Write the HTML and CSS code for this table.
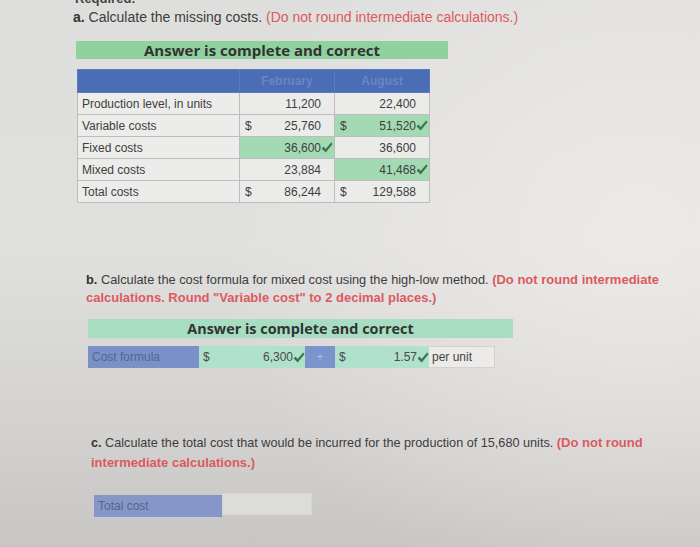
FILE: index.html
```html
<!DOCTYPE html>
<html>
<head>
<meta charset="utf-8">
<link rel="stylesheet" href="styles.css">
</head>
<body>
<div class="page">
  <p class="req">Required:</p>
  <p class="q qa"><b>a.</b> Calculate the missing costs. <span class="red">(Do not round intermediate calculations.)</span></p>
  <div class="banner banner-a">Answer is complete and correct</div>
  <table class="costs">
    <thead>
      <tr><th class="lbl"></th><th>February</th><th>August</th></tr>
    </thead>
    <tbody>
      <tr><td class="lbl">Production level, in units</td>
        <td><div class="cell"><span class="cur"></span><span class="val">11,200</span><span class="ck"></span></div></td>
        <td><div class="cell"><span class="cur"></span><span class="val">22,400</span><span class="ck"></span></div></td></tr>
      <tr><td class="lbl">Variable costs</td>
        <td><div class="cell"><span class="cur">$</span><span class="val">25,760</span><span class="ck"></span></div></td>
        <td class="ok"><div class="cell"><span class="cur">$</span><span class="val">51,520</span><span class="ck"><svg viewBox="0 0 12 11" class="tick"><path d="M0.6 6.4 L2.6 4.6 L4.6 6.9 L10.2 0.6 L11.6 2 L4.7 10.4 Z"/></svg></span></div></td></tr>
      <tr><td class="lbl">Fixed costs</td>
        <td class="ok"><div class="cell"><span class="cur"></span><span class="val">36,600</span><span class="ck"><svg viewBox="0 0 12 11" class="tick"><path d="M0.6 6.4 L2.6 4.6 L4.6 6.9 L10.2 0.6 L11.6 2 L4.7 10.4 Z"/></svg></span></div></td>
        <td><div class="cell"><span class="cur"></span><span class="val">36,600</span><span class="ck"></span></div></td></tr>
      <tr><td class="lbl">Mixed costs</td>
        <td><div class="cell"><span class="cur"></span><span class="val">23,884</span><span class="ck"></span></div></td>
        <td class="ok"><div class="cell"><span class="cur"></span><span class="val">41,468</span><span class="ck"><svg viewBox="0 0 12 11" class="tick"><path d="M0.6 6.4 L2.6 4.6 L4.6 6.9 L10.2 0.6 L11.6 2 L4.7 10.4 Z"/></svg></span></div></td></tr>
      <tr><td class="lbl">Total costs</td>
        <td><div class="cell"><span class="cur">$</span><span class="val">86,244</span><span class="ck"></span></div></td>
        <td><div class="cell"><span class="cur">$</span><span class="val">129,588</span><span class="ck"></span></div></td></tr>
    </tbody>
  </table>

  <p class="q qb"><span class="reg"><b>b.</b> Calculate the cost formula for mixed cost using the high-low method. </span><span class="red strong">(Do not round intermediate</span><br><span class="red strong">calculations. Round "Variable cost" to 2 decimal places.)</span></p>
  <div class="banner banner-b">Answer is complete and correct</div>
  <div class="formula">
    <div class="f-lbl">Cost formula</div>
    <div class="f-val f-fixed"><span class="cur">$</span><span class="val">6,300</span><svg viewBox="0 0 12 11" class="tick"><path d="M0.6 6.4 L2.6 4.6 L4.6 6.9 L10.2 0.6 L11.6 2 L4.7 10.4 Z"/></svg></div>
    <div class="f-plus">+</div>
    <div class="f-val f-var"><span class="cur">$</span><span class="val">1.57</span><svg viewBox="0 0 12 11" class="tick"><path d="M0.6 6.4 L2.6 4.6 L4.6 6.9 L10.2 0.6 L11.6 2 L4.7 10.4 Z"/></svg></div>
    <div class="f-unit">per unit</div>
  </div>

  <p class="q qc"><span class="reg"><b>c.</b> Calculate the total cost that would be incurred for the production of 15,680 units. </span><span class="red strong">(Do not round</span><br><span class="red strong">intermediate calculations.)</span></p>
  <div class="total">
    <div class="t-lbl">Total cost</div>
    <div class="t-input"></div>
  </div>
</div>
</body>
</html>
```

FILE: styles.css
```css
html, body {
  margin: 0;
  padding: 0;
}
body {
  width: 700px;
  height: 547px;
  overflow: hidden;
  font-family: "Liberation Sans", Arial, sans-serif;
  color: #3c3c3c;
  background:
    radial-gradient(ellipse 420px 380px at 640px 230px, rgba(238,236,234,0.85), rgba(238,236,234,0) 100%),
    linear-gradient(180deg, #dededc 0%, #e0e0de 45%, #d2d1cf 80%, #c7c6c4 100%);
}
.page {
  display: flow-root;
}
p { margin: 0; }

.req {
  margin: -8px 0 0 75px;
  font-size: 13px;
  font-weight: bold;
  line-height: 14px;
  color: #444;
}
.q {
  font-size: 13px;
  white-space: nowrap;
}
.q b { font-weight: bold; color: #333; }
.red { color: #dc5a5e; }
.strong { font-weight: bold; }

.qa {
  margin: 3px 0 0 73px;
  line-height: 16px;
  font-size: 14px;
}

.banner {
  font-family: "Open Sans", "DejaVu Sans", sans-serif;
  font-weight: bold;
  color: #333;
  text-align: center;
}
.banner-a {
  margin: 16px 0 0 76px;
  width: 372px;
  height: 18px;
  line-height: 18px;
  font-size: 15px;
  background: #8fd29f;
}

.costs {
  margin: 10px 0 0 77px;
  border-collapse: collapse;
  font-size: 12px;
  color: #3e3e3e;
  border: 1px solid #a9a9a9;
}
.costs th {
  background: #4b6db5;
  color: #6885c4;
  height: 22px;
  padding: 0;
  font-weight: bold;
  font-size: 12px;
  border: 1px solid #5a7abd;
  width: 94px;
}
.costs th.lbl { width: 161px; }
.costs td {
  height: 21px;
  padding: 0;
  border: 1px solid #bdbdbd;
  background: #ebebea;
}
.costs td.lbl {
  padding-left: 4px;
  background: #ececeb;
}
.costs td.ok { background: #a4dab3; }
.cell {
  display: flex;
  align-items: center;
  padding-left: 5px;
}
.cell .cur { width: 12px; }
.cell .val { flex: 1; text-align: right; }
.cell .ck {
  width: 13px;
  display: flex;
  align-items: center;
}
.tick {
  width: 12px;
  height: 11px;
  fill: #3e7449;
  flex: none;
}

.qb {
  margin: 68px 0 0 86px;
  line-height: 18px;
  font-size: 13px;
}
.qb .reg { font-size: 12.8px; }
.banner-b {
  margin: 12px 0 0 88px;
  width: 425px;
  height: 19px;
  line-height: 19px;
  font-size: 14.4px;
  background: #a7dec2;
}

.formula {
  margin: 8px 0 0 88px;
  display: flex;
  height: 22px;
  font-size: 12px;
  line-height: 22px;
}
.f-lbl {
  width: 107px;
  padding-left: 4px;
  background: #7a91c8;
  color: #55668e;
}
.f-val {
  display: flex;
  align-items: center;
  background: #b0e1cd;
  color: #4a4a4a;
  padding-left: 4px;
}
.f-fixed { width: 102px; }
.f-var { width: 90px; }
.f-val .cur { width: 12px; }
.f-val .val { flex: 1; text-align: right; }
.f-plus {
  width: 30px;
  background: #7b94cc;
  color: #a9bde4;
  text-align: center;
}
.f-unit {
  width: 62px;
  padding-left: 3px;
  background: #ecebea;
  border: 1px solid #d2d2d0;
  border-left: none;
  line-height: 20px;
  color: #444;
}

.qc {
  margin: 65px 0 0 91px;
  line-height: 20px;
  font-size: 13px;
}
.qc .reg { font-size: 12.67px; }
.total {
  margin: 20px 0 0 94px;
  display: flex;
  align-items: flex-start;
}
.t-lbl {
  width: 124px;
  height: 22px;
  line-height: 22px;
  padding-left: 4px;
  margin-top: 2px;
  background: #8597c8;
  color: #56668c;
  font-size: 12px;
}
.t-input {
  width: 88px;
  height: 20px;
  border: 1px solid #d6d5d2;
  background: #dcdcda;
}
```
